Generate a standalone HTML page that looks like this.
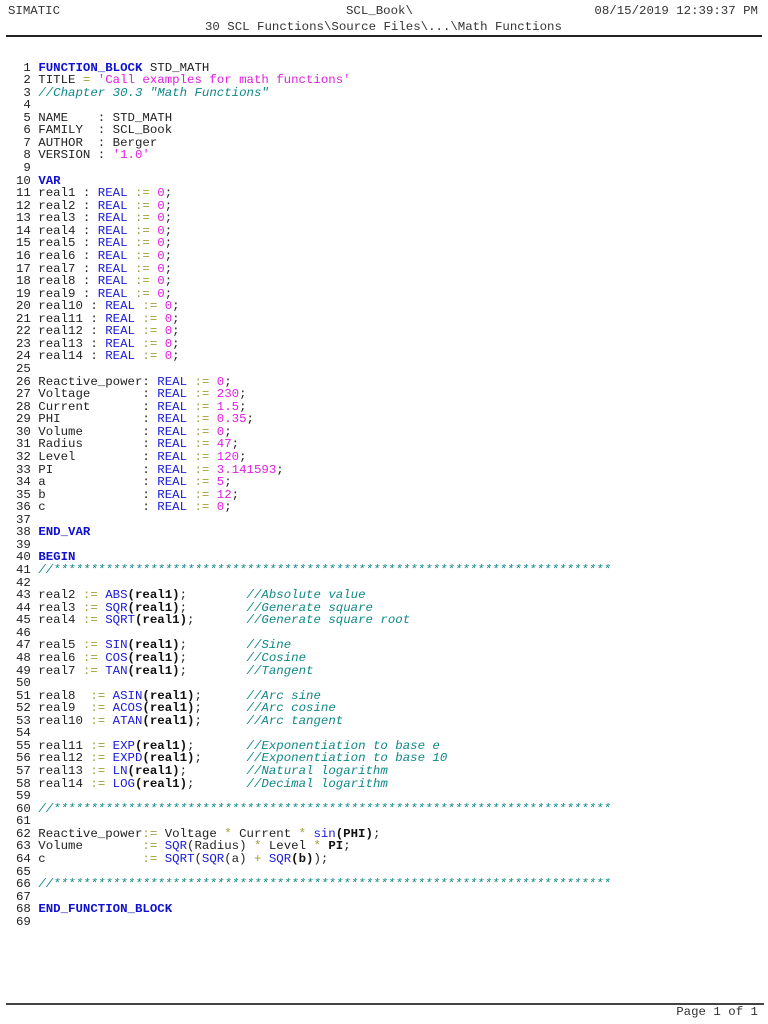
<!DOCTYPE html>
<html><head><meta charset="utf-8"><style>
html,body{margin:0;padding:0;background:#fff;width:768px;height:1024px;overflow:hidden;position:relative}
.h{position:absolute;font-family:"Liberation Mono",monospace;font-size:12.4px;color:#333;white-space:pre;line-height:14px}
pre{position:absolute;left:16px;top:61.5px;margin:0;font-family:"Liberation Mono",monospace;font-size:12.4px;line-height:12.57px;color:#222}
.k{color:#1010d0;font-weight:bold}.f{color:#1a1ad8}.o{color:#a0a040}.n{color:#e020e0}.c{color:#108888;font-style:italic}.b{font-weight:bold;color:#111}
</style></head><body>
<div class="h" style="left:8px;top:4px">SIMATIC</div>
<div class="h" style="left:346px;top:4px">SCL_Book\</div>
<div class="h" style="right:10px;top:4px">08/15/2019 12:39:37 PM</div>
<div class="h" style="left:205px;top:20px">30 SCL Functions\Source Files\...\Math Functions</div>
<div style="position:absolute;left:6px;right:6px;top:35px;height:2px;background:#222"></div>
<pre> 1 <span class="k">FUNCTION_BLOCK</span> STD_MATH
 2 TITLE <span class="o">=</span> <span class="n">'Call examples for math functions'</span>
 3 <span class="c">//Chapter 30.3 "Math Functions"</span>
 4
 5 NAME    : STD_MATH
 6 FAMILY  : SCL_Book
 7 AUTHOR  : Berger
 8 VERSION : <span class="n">'1.0'</span>
 9
10 <span class="k">VAR</span>
11 real1 : <span class="f">REAL</span> <span class="o">:=</span> <span class="n">0</span>;
12 real2 : <span class="f">REAL</span> <span class="o">:=</span> <span class="n">0</span>;
13 real3 : <span class="f">REAL</span> <span class="o">:=</span> <span class="n">0</span>;
14 real4 : <span class="f">REAL</span> <span class="o">:=</span> <span class="n">0</span>;
15 real5 : <span class="f">REAL</span> <span class="o">:=</span> <span class="n">0</span>;
16 real6 : <span class="f">REAL</span> <span class="o">:=</span> <span class="n">0</span>;
17 real7 : <span class="f">REAL</span> <span class="o">:=</span> <span class="n">0</span>;
18 real8 : <span class="f">REAL</span> <span class="o">:=</span> <span class="n">0</span>;
19 real9 : <span class="f">REAL</span> <span class="o">:=</span> <span class="n">0</span>;
20 real10 : <span class="f">REAL</span> <span class="o">:=</span> <span class="n">0</span>;
21 real11 : <span class="f">REAL</span> <span class="o">:=</span> <span class="n">0</span>;
22 real12 : <span class="f">REAL</span> <span class="o">:=</span> <span class="n">0</span>;
23 real13 : <span class="f">REAL</span> <span class="o">:=</span> <span class="n">0</span>;
24 real14 : <span class="f">REAL</span> <span class="o">:=</span> <span class="n">0</span>;
25
26 Reactive_power: <span class="f">REAL</span> <span class="o">:=</span> <span class="n">0</span>;
27 Voltage       : <span class="f">REAL</span> <span class="o">:=</span> <span class="n">230</span>;
28 Current       : <span class="f">REAL</span> <span class="o">:=</span> <span class="n">1.5</span>;
29 PHI           : <span class="f">REAL</span> <span class="o">:=</span> <span class="n">0.35</span>;
30 Volume        : <span class="f">REAL</span> <span class="o">:=</span> <span class="n">0</span>;
31 Radius        : <span class="f">REAL</span> <span class="o">:=</span> <span class="n">47</span>;
32 Level         : <span class="f">REAL</span> <span class="o">:=</span> <span class="n">120</span>;
33 PI            : <span class="f">REAL</span> <span class="o">:=</span> <span class="n">3.141593</span>;
34 a             : <span class="f">REAL</span> <span class="o">:=</span> <span class="n">5</span>;
35 b             : <span class="f">REAL</span> <span class="o">:=</span> <span class="n">12</span>;
36 c             : <span class="f">REAL</span> <span class="o">:=</span> <span class="n">0</span>;
37
38 <span class="k">END_VAR</span>
39
40 <span class="k">BEGIN</span>
41 <span class="c">//***************************************************************************</span>
42
43 real2 <span class="o">:=</span> <span class="f">ABS</span><span class="b">(real1)</span>;        <span class="c">//Absolute value</span>
44 real3 <span class="o">:=</span> <span class="f">SQR</span><span class="b">(real1)</span>;        <span class="c">//Generate square</span>
45 real4 <span class="o">:=</span> <span class="f">SQRT</span><span class="b">(real1)</span>;       <span class="c">//Generate square root</span>
46
47 real5 <span class="o">:=</span> <span class="f">SIN</span><span class="b">(real1)</span>;        <span class="c">//Sine</span>
48 real6 <span class="o">:=</span> <span class="f">COS</span><span class="b">(real1)</span>;        <span class="c">//Cosine</span>
49 real7 <span class="o">:=</span> <span class="f">TAN</span><span class="b">(real1)</span>;        <span class="c">//Tangent</span>
50
51 real8  <span class="o">:=</span> <span class="f">ASIN</span><span class="b">(real1)</span>;      <span class="c">//Arc sine</span>
52 real9  <span class="o">:=</span> <span class="f">ACOS</span><span class="b">(real1)</span>;      <span class="c">//Arc cosine</span>
53 real10 <span class="o">:=</span> <span class="f">ATAN</span><span class="b">(real1)</span>;      <span class="c">//Arc tangent</span>
54
55 real11 <span class="o">:=</span> <span class="f">EXP</span><span class="b">(real1)</span>;       <span class="c">//Exponentiation to base e</span>
56 real12 <span class="o">:=</span> <span class="f">EXPD</span><span class="b">(real1)</span>;      <span class="c">//Exponentiation to base 10</span>
57 real13 <span class="o">:=</span> <span class="f">LN</span><span class="b">(real1)</span>;        <span class="c">//Natural logarithm</span>
58 real14 <span class="o">:=</span> <span class="f">LOG</span><span class="b">(real1)</span>;       <span class="c">//Decimal logarithm</span>
59
60 <span class="c">//***************************************************************************</span>
61
62 Reactive_power<span class="o">:=</span> Voltage <span class="o">*</span> Current <span class="o">*</span> <span class="f">sin</span><span class="b">(PHI)</span>;
63 Volume        <span class="o">:=</span> <span class="f">SQR</span>(Radius) <span class="o">*</span> Level <span class="o">*</span> <span class="b">PI</span>;
64 c             <span class="o">:=</span> <span class="f">SQRT</span>(<span class="f">SQR</span>(a) <span class="o">+</span> <span class="f">SQR</span><span class="b">(b)</span>);
65
66 <span class="c">//***************************************************************************</span>
67
68 <span class="k">END_FUNCTION_BLOCK</span>
69</pre>
<div style="position:absolute;left:6px;right:4px;top:1003px;height:2px;background:#444"></div>
<div class="h" style="right:10px;top:1005px">Page 1 of 1</div>
</body></html>
